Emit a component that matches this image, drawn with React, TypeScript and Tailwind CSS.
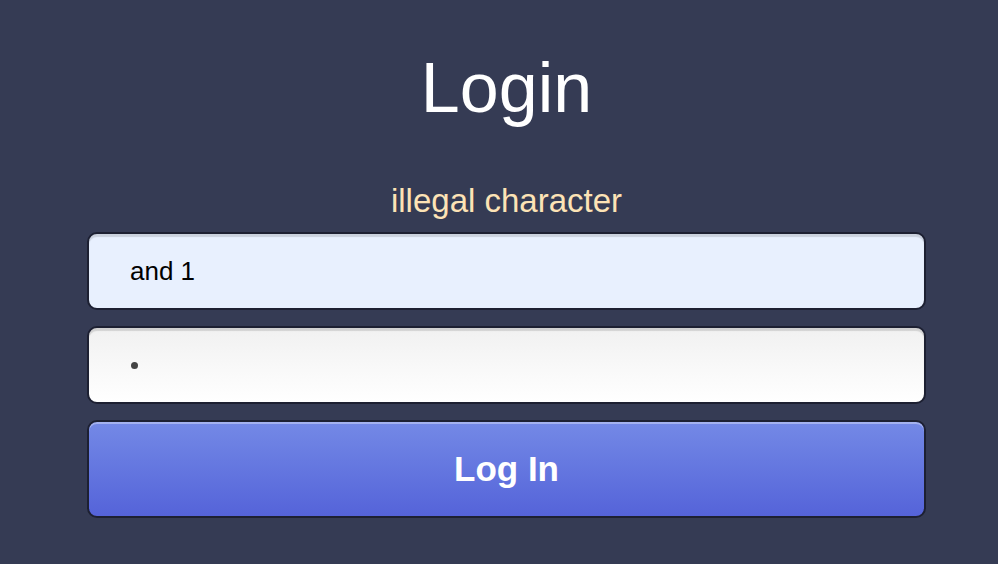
import React from "react";

export default function App() {
  return (
    <div
      className="min-h-[564px] w-full bg-[#353b54] pl-[87px] pr-[72px]"
      style={{ fontFamily: '"Liberation Sans", Arial, sans-serif' }}
    >
      <h1 className="pt-[53px] text-center text-[70px] leading-[70px] font-normal text-white">
        Login
      </h1>
      <p className="mt-[62px] text-center text-[33px] leading-[32px] text-[#fde3b6]">
        illegal character
      </p>
      <form className="mt-[15px] flex flex-col gap-[16px]" onSubmit={(e) => e.preventDefault()}>
        <input
          defaultValue="and 1"
          className="h-[78px] w-full rounded-[10px] border-2 border-[#1d2032] bg-[#e8f0fe] pl-[41px] text-[26px] text-black shadow-[inset_0_3px_1px_rgba(0,0,0,0.13)] outline-none"
        />
        <div className="flex h-[78px] w-full items-center rounded-[10px] border-2 border-[#1d2032] bg-gradient-to-b from-[#f1f1f1] to-[#ffffff] pl-[42px] shadow-[inset_0_3px_1px_rgba(0,0,0,0.13)]">
          <span className="block h-[7px] w-[7px] rounded-full bg-[#444444]" />
        </div>
        <button
          type="submit"
          className="h-[98px] w-full rounded-[10px] border-2 border-[#1d2032] bg-gradient-to-b from-[#7489e6] to-[#5563d9] text-[35px] font-bold text-white shadow-[inset_0_2px_0_rgba(255,255,255,0.35)]"
        >
          Log In
        </button>
      </form>
    </div>
  );
}
